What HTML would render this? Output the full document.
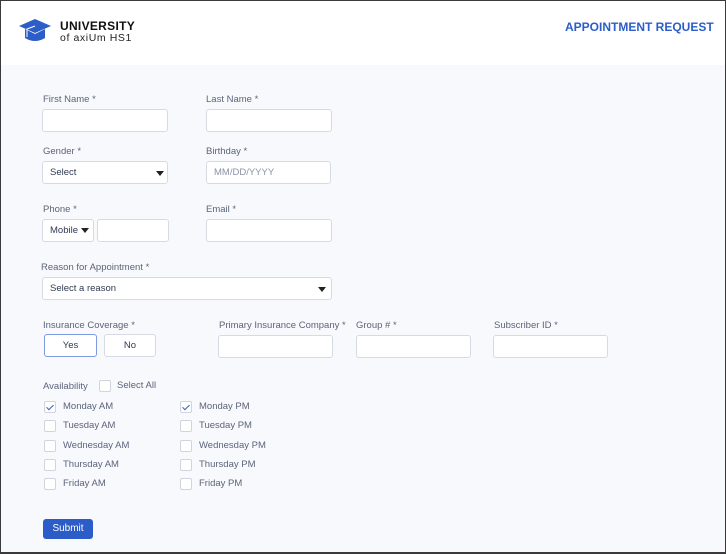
<!DOCTYPE html>
<html><head><meta charset="utf-8"><style>
*{box-sizing:border-box;margin:0;padding:0}
body{width:726px;height:554px;overflow:hidden;font-family:"Liberation Sans",sans-serif;background:#fff}
#f{position:absolute;left:0;top:0;width:726px;height:554px;border:1px solid #3a3a3a;border-bottom:2px solid #3a3a3a;background:#f8f9fd}
#h{position:absolute;left:0;top:0;width:724px;height:64px;background:#fff}
.a{position:absolute;white-space:nowrap}
.l{position:absolute;font-size:9.5px;color:#5b6479;line-height:12px;white-space:nowrap}
.i{position:absolute;background:#fff;border:1px solid #d6dae3;border-radius:3px;font-size:9.5px;color:#2f3a52;line-height:21px;padding-left:7px}
.tri{position:absolute;width:0;height:0;border-left:4px solid transparent;border-right:4px solid transparent;border-top:5px solid #222}
.cb{position:absolute;width:12px;height:12px;background:#fff;border:1px solid #d0d4dd;border-radius:2px}
.ck::after{content:"";position:absolute;left:3px;top:1px;width:3px;height:6px;border:solid #3b63c4;border-width:0 1.3px 1.3px 0;transform:rotate(45deg)}
</style></head><body><div id="f">
<div id="h">
<svg class="a" style="left:17px;top:17px" width="34" height="26" viewBox="0 0 34 26"><path d="M17 1 L33 8 L17 15 L1 8 Z" fill="#2c5ec7"/><path d="M7 11 L7 20 Q17 26 27 20 L27 11 L17 16 Z" fill="#2c5ec7"/><path d="M17 8 L9 11 L9 19" stroke="#fff" stroke-width="1" fill="none"/></svg>
<div class="a" style="left:59px;top:18px;font-size:12px;font-weight:bold;letter-spacing:0.3px;color:#111">UNIVERSITY</div>
<div class="a" style="left:59px;top:31px;font-size:10.5px;letter-spacing:0.6px;color:#222">of axiUm HS1</div>
<div class="a" style="left:564px;top:19px;font-size:12px;font-weight:bold;color:#2c5ec7">APPOINTMENT REQUEST</div>
</div>
<div class="l" style="left:42px;top:93px">First Name *</div>
<div class="i" style="left:41px;top:108px;width:126px;height:23px"></div>
<div class="l" style="left:205px;top:93px">Last Name *</div>
<div class="i" style="left:205px;top:108px;width:126px;height:23px"></div>
<div class="l" style="left:42px;top:145px">Gender *</div>
<div class="i" style="left:41px;top:160px;width:126px;height:23px">Select</div><div class="tri" style="left:155px;top:170px"></div>
<div class="l" style="left:205px;top:145px">Birthday *</div>
<div class="i" style="left:205px;top:160px;width:125px;height:23px;color:#8a92a3">MM/DD/YYYY</div>
<div class="l" style="left:42px;top:203px">Phone *</div>
<div class="i" style="left:41px;top:218px;width:52px;height:23px">Mobile</div><div class="tri" style="left:80px;top:227px"></div>
<div class="i" style="left:96px;top:218px;width:72px;height:23px"></div>
<div class="l" style="left:205px;top:203px">Email *</div>
<div class="i" style="left:205px;top:218px;width:126px;height:23px"></div>
<div class="l" style="left:40px;top:261px">Reason for Appointment *</div>
<div class="i" style="left:41px;top:276px;width:290px;height:23px">Select a reason</div><div class="tri" style="left:317px;top:286px"></div>
<div class="l" style="left:42px;top:319px">Insurance Coverage *</div>
<div class="i" style="left:43px;top:333px;width:53px;height:23px;border-color:#7d9be0;text-align:center;padding:0">Yes</div>
<div class="i" style="left:103px;top:333px;width:52px;height:23px;text-align:center;padding:0">No</div>
<div class="l" style="left:218px;top:319px">Primary Insurance Company *</div>
<div class="i" style="left:217px;top:334px;width:115px;height:23px"></div>
<div class="l" style="left:355px;top:319px">Group # *</div>
<div class="i" style="left:355px;top:334px;width:115px;height:23px"></div>
<div class="l" style="left:493px;top:319px">Subscriber ID *</div>
<div class="i" style="left:492px;top:334px;width:115px;height:23px"></div>
<div class="l" style="left:42px;top:380px">Availability</div>
<div class="cb" style="left:98px;top:379px"></div><div class="l" style="left:116px;top:379px">Select All</div>
<div class="cb ck" style="left:43px;top:400px"></div><div class="l" style="left:62px;top:400px">Monday AM</div>
<div class="cb" style="left:43px;top:419px"></div><div class="l" style="left:62px;top:419px">Tuesday AM</div>
<div class="cb" style="left:43px;top:439px"></div><div class="l" style="left:62px;top:439px">Wednesday AM</div>
<div class="cb" style="left:43px;top:458px"></div><div class="l" style="left:62px;top:458px">Thursday AM</div>
<div class="cb" style="left:43px;top:477px"></div><div class="l" style="left:62px;top:477px">Friday AM</div>
<div class="cb ck" style="left:179px;top:400px"></div><div class="l" style="left:198px;top:400px">Monday PM</div>
<div class="cb" style="left:179px;top:419px"></div><div class="l" style="left:198px;top:419px">Tuesday PM</div>
<div class="cb" style="left:179px;top:439px"></div><div class="l" style="left:198px;top:439px">Wednesday PM</div>
<div class="cb" style="left:179px;top:458px"></div><div class="l" style="left:198px;top:458px">Thursday PM</div>
<div class="cb" style="left:179px;top:477px"></div><div class="l" style="left:198px;top:477px">Friday PM</div>
<div class="a" style="left:42px;top:518px;width:50px;height:20px;background:#2c5cc7;border-radius:3px;color:#fff;font-size:10px;text-align:center;line-height:20px">Submit</div>
</div></body></html>
